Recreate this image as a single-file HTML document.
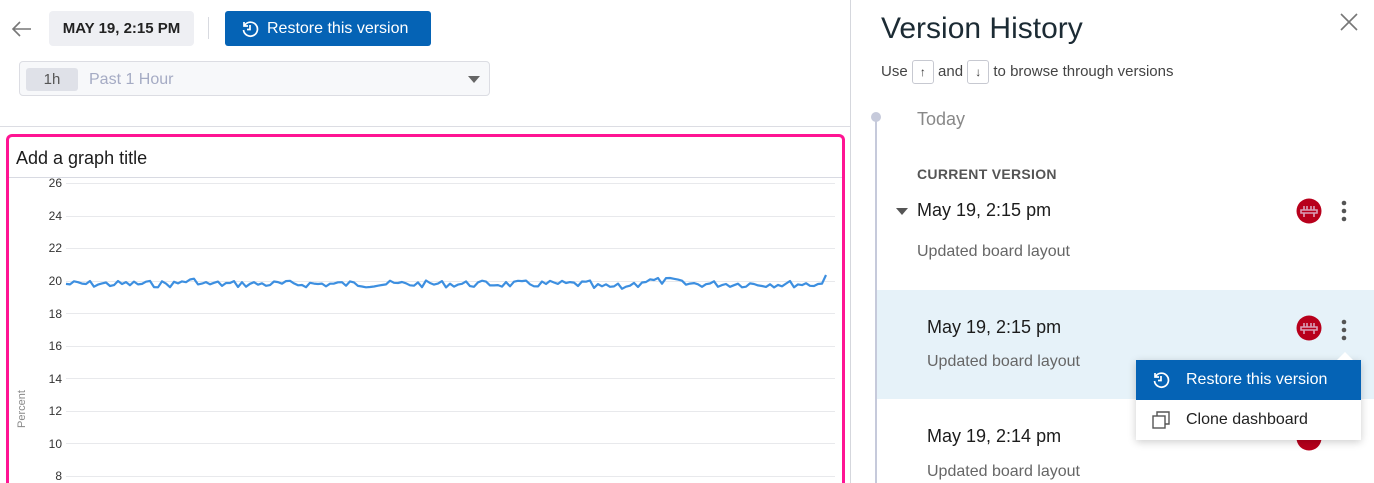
<!DOCTYPE html>
<html><head><meta charset="utf-8"><style>
*{box-sizing:border-box;margin:0;padding:0}
html,body{width:1374px;height:483px;overflow:hidden}
body{background:#fff;font-family:"Liberation Sans","DejaVu Sans",sans-serif;position:relative;color:#1c2b34}
.abs{position:absolute}
.kbd{display:inline-block;width:22px;height:24px;border:1px solid #c7c9d1;border-radius:3px;text-align:center;font-size:12px;line-height:22px;vertical-align:middle;color:#333}
</style></head><body>
<svg class="abs" style="left:10px;top:18px" width="24" height="22" viewBox="0 0 24 22"><path d="M21 11H3M10 4L3 11l7 7" stroke="#777" stroke-width="1.6" fill="none"/></svg>
<div class="abs" style="left:49px;top:11px;width:145px;height:35px;background:#eeeff3;border-radius:4px;font-weight:bold;font-size:15px;line-height:35px;text-align:center;color:#222">MAY 19, 2:15 PM</div>
<div class="abs" style="left:208px;top:17px;width:1px;height:22px;background:#d8dae0"></div>
<div class="abs" style="left:225px;top:11px;width:206px;height:35px;background:#0563b5;border-radius:3px;color:#fff;font-size:16px;line-height:35px">
<svg class="abs" style="left:15px;top:8px" width="20" height="20" viewBox="0 0 20 20"><path d="M4.5 6.5A7 7 0 1 1 3.5 11" stroke="#fff" stroke-width="1.7" fill="none"/><path d="M4 3v4h4M10 6v4.5H7" stroke="#fff" stroke-width="1.7" fill="none"/></svg>
<span style="position:absolute;left:42px">Restore this version</span></div>
<div class="abs" style="left:19px;top:61px;width:471px;height:35px;background:#f7f8fa;border:1px solid #dcdde3;border-radius:4px">
<div class="abs" style="left:6px;top:6px;width:52px;height:23px;background:#dfe1e8;border-radius:3px;text-align:center;line-height:23px;font-size:15px;color:#555">1h</div>
<div class="abs" style="left:69px;top:6px;line-height:23px;font-size:16px;color:#a5abc4">Past 1 Hour</div>
<div class="abs" style="left:448px;top:14px;border-left:6px solid transparent;border-right:6px solid transparent;border-top:7px solid #666"></div>
</div>
<div class="abs" style="left:0;top:126px;width:850px;height:1px;background:#dcdde3"></div>
<div class="abs" style="left:6px;top:134px;width:839px;height:349px;border:3px solid #ff1493;border-bottom:none;border-radius:6px 6px 0 0;background:#fff">
<div class="abs" style="left:7px;top:11px;font-size:18px;color:#1c1c1c">Add a graph title</div>
<div class="abs" style="left:0;top:40px;width:833px;height:1px;background:#d8dae2"></div>
</div>
<svg class="abs" style="left:0;top:0" width="850" height="483">
<g font-size="12" fill="#333" text-anchor="end" font-family="Liberation Sans,sans-serif">
<text x="62" y="187">26</text><text x="62" y="220">24</text><text x="62" y="252">22</text><text x="62" y="285">20</text><text x="62" y="318">18</text><text x="62" y="350">16</text><text x="62" y="383">14</text><text x="62" y="415">12</text><text x="62" y="448">10</text><text x="62" y="480">8</text>
</g>
<g stroke="#e8e9ec" stroke-width="1"><line x1="66" x2="835" y1="183.5" y2="183.5"/><line x1="66" x2="835" y1="216.5" y2="216.5"/><line x1="66" x2="835" y1="248.5" y2="248.5"/><line x1="66" x2="835" y1="281.5" y2="281.5"/><line x1="66" x2="835" y1="313.5" y2="313.5"/><line x1="66" x2="835" y1="346.5" y2="346.5"/><line x1="66" x2="835" y1="378.5" y2="378.5"/><line x1="66" x2="835" y1="411.5" y2="411.5"/><line x1="66" x2="835" y1="443.5" y2="443.5"/><line x1="66" x2="835" y1="476.5" y2="476.5"/></g>
<text x="0" y="0" transform="translate(25,428) rotate(-90)" font-size="11" fill="#888">Percent</text>
<polyline id="pl" fill="none" stroke="#3d8fe0" stroke-width="2.2" stroke-linejoin="round" points=""/>
</svg>
<script>
var s=7,p=[];function r(){s=(s*9301+49297)%233280;return s/233280}
for(var x=66;x<=829;x+=4){var y=284+(r()-0.5)*7; if(x>180&&x<200)y-=3; if(x>590&&x<630)y+=3; if(x>640&&x<680)y-=3; if(x>=825)y=275; p.push(x+","+y.toFixed(1))}
document.getElementById('pl').setAttribute('points',p.join(' '));
</script>
<div class="abs" style="left:850px;top:0;width:524px;height:483px;background:#fff;border-left:1px solid #d5d7dd;overflow:hidden">
<div class="abs" style="left:30px;top:12px;font-size:30px;color:#1c2b34">Version History</div>
<svg class="abs" style="left:488px;top:12px" width="20" height="20"><path d="M2 2L18 18M18 2L2 18" stroke="#777" stroke-width="1.6"/></svg>
<div class="abs" style="left:30px;top:60px;font-size:15px;color:#444;line-height:24px">Use <span class="kbd">↑</span> and <span class="kbd">↓</span> to browse through versions</div>
<div class="abs" style="left:24px;top:116px;width:2px;height:367px;background:#c6cadb"></div>
<div class="abs" style="left:20px;top:112px;width:10px;height:10px;border-radius:50%;background:#c6cadb"></div>
<div class="abs" style="left:66px;top:109px;font-size:18px;color:#888">Today</div>
<div class="abs" style="left:66px;top:166px;font-size:14px;font-weight:bold;color:#555;letter-spacing:.3px">CURRENT VERSION</div>
<div class="abs" style="left:45px;top:208px;border-left:6px solid transparent;border-right:6px solid transparent;border-top:7px solid #555"></div>
<div class="abs" style="left:66px;top:200px;font-size:18px;color:#1c1c1c">May 19, 2:15 pm</div>
<div class="abs" style="left:66px;top:243px;font-size:16px;color:#666">Updated board layout</div>
<div class="abs" style="left:26px;top:290px;width:498px;height:109px;background:#e6f2f9"></div>
<div class="abs" style="left:76px;top:317px;font-size:18px;color:#1c1c1c">May 19, 2:15 pm</div>
<div class="abs" style="left:76px;top:353px;font-size:16px;color:#666">Updated board layout</div>
<div class="abs" style="left:76px;top:426px;font-size:18px;color:#1c1c1c">May 19, 2:14 pm</div>
<div class="abs" style="left:76px;top:462px;font-size:16px;color:#666;line-height:19px">Updated board layout</div>
<svg class="abs" style="left:445px;top:198px" width="26" height="26"><circle cx="13" cy="13" r="12.5" fill="#b8001c"/><path d="M8 8v4M11 8v4M15 8v4M18 8v4M5 12h16v3H5zM8 15v4M18 15v4" stroke="#d9a0b8" stroke-width="1.6" fill="none"/></svg>
<svg class="abs" style="left:445px;top:315px" width="26" height="26"><circle cx="13" cy="13" r="12.5" fill="#b8001c"/><path d="M8 8v4M11 8v4M15 8v4M18 8v4M5 12h16v3H5zM8 15v4M18 15v4" stroke="#d9a0b8" stroke-width="1.6" fill="none"/></svg>
<svg class="abs" style="left:445px;top:425px" width="26" height="26"><circle cx="13" cy="13" r="12.5" fill="#b8001c"/></svg>
<svg class="abs" style="left:488px;top:198px" width="10" height="26"><circle cx="5" cy="5" r="2.3" fill="#555"/><circle cx="5" cy="13" r="2.3" fill="#555"/><circle cx="5" cy="21" r="2.3" fill="#555"/></svg>
<svg class="abs" style="left:488px;top:317px" width="10" height="26"><circle cx="5" cy="5" r="2.3" fill="#555"/><circle cx="5" cy="13" r="2.3" fill="#555"/><circle cx="5" cy="21" r="2.3" fill="#555"/></svg>
<div class="abs" style="left:285px;top:360px;width:225px;height:80px;background:#fff;box-shadow:0 2px 8px rgba(0,0,0,.2)">
<div class="abs" style="left:209px;top:-8px;width:0;height:0;border-left:9px solid transparent;border-right:9px solid transparent;border-bottom:9px solid #fff;margin-left:-9px"></div>
<div class="abs" style="left:0;top:0;width:225px;height:40px;background:#0563b5;color:#fff;font-size:16px;line-height:40px">
<svg class="abs" style="left:15px;top:10px" width="20" height="20" viewBox="0 0 20 20"><path d="M4.5 6.5A7 7 0 1 1 3.5 11" stroke="#fff" stroke-width="1.7" fill="none"/><path d="M4 3v4h4M10 6v4.5H7" stroke="#fff" stroke-width="1.7" fill="none"/></svg>
<span class="abs" style="left:50px">Restore this version</span></div>
<div class="abs" style="left:0;top:40px;width:225px;height:40px;font-size:16px;line-height:40px;color:#222">
<svg class="abs" style="left:16px;top:11px" width="18" height="18"><rect x="1" y="5" width="12" height="12" fill="none" stroke="#555" stroke-width="1.4"/><path d="M5 5V1h12v12h-4" fill="none" stroke="#555" stroke-width="1.4"/></svg>
<span class="abs" style="left:50px">Clone dashboard</span></div>
</div>
</div>
</body></html>
